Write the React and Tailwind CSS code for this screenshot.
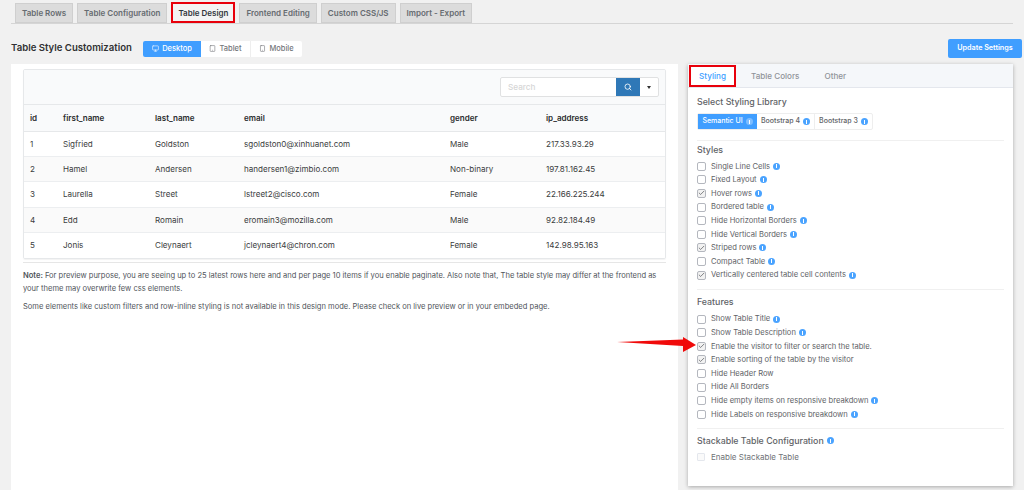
import { Monitor, Tablet, Smartphone, Search, Check } from 'lucide-react';

const tabs = ['Table Rows', 'Table Configuration', 'Table Design', 'Frontend Editing', 'Custom CSS/JS', 'Import - Export'];

const rows = [
  [1, 'Sigfried', 'Goldston', 'sgoldston0@xinhuanet.com', 'Male', '217.33.93.29'],
  [2, 'Hamel', 'Andersen', 'handersen1@zimbio.com', 'Non-binary', '197.81.162.45'],
  [3, 'Laurella', 'Street', 'lstreet2@cisco.com', 'Female', '22.166.225.244'],
  [4, 'Edd', 'Romain', 'eromain3@mozilla.com', 'Male', '92.82.184.49'],
  [5, 'Jonis', 'Cleynaert', 'jcleynaert4@chron.com', 'Female', '142.98.95.163'],
];

const styleOptions = [
  { label: 'Single Line Cells', info: true },
  { label: 'Fixed Layout', info: true },
  { label: 'Hover rows', info: true, checked: true },
  { label: 'Bordered table', info: true },
  { label: 'Hide Horizontal Borders', info: true },
  { label: 'Hide Vertical Borders', info: true },
  { label: 'Striped rows', info: true, checked: true },
  { label: 'Compact Table', info: true },
  { label: 'Vertically centered table cell contents', info: true, checked: true },
];

const featureOptions = [
  { label: 'Show Table Title', info: true },
  { label: 'Show Table Description', info: true },
  { label: 'Enable the visitor to filter or search the table.', checked: true },
  { label: 'Enable sorting of the table by the visitor', checked: true },
  { label: 'Hide Header Row' },
  { label: 'Hide All Borders' },
  { label: 'Hide empty items on responsive breakdown', info: true },
  { label: 'Hide Labels on responsive breakdown', info: true },
];

function InfoDot({ muted }) {
  return (
    <span className={`ml-[3px] inline-flex h-[7px] w-[7px] shrink-0 items-center justify-center rounded-full ${muted ? 'bg-[#7dbdff]' : 'bg-[#4aa3ff]'}`}>
      <span className="h-[4px] w-[1px] bg-white"></span>
    </span>
  );
}

function OptionRow({ option }) {
  return (
    <div className="flex h-[13.6px] items-center text-[7.6px] text-[#606266]">
      <span className={`mr-[5px] flex h-[9px] w-[9px] shrink-0 items-center justify-center rounded-[2px] border border-[#b4b7be] ${option.checked ? 'bg-[#f2f2f2]' : 'bg-white'}`}>
        {option.checked && <Check size={8} strokeWidth={2.5} className="text-[#55585c]" />}
      </span>
      <span>{option.label}</span>
      {option.info && <InfoDot />}
    </div>
  );
}

export default function App() {
  return (
    <div className="relative h-[490px] w-[1024px] overflow-hidden bg-[#f1f1f1] font-['Inter',sans-serif]">
      {/* Top tabs */}
      <div className="mx-[11px] flex h-[24px] items-end gap-[4px] border-b border-[#d5d5d5] pl-[4px]">
        {tabs.map((tab) =>
          tab === 'Table Design' ? (
            <div key={tab} className="flex h-[21px] items-center border-2 border-[#e8000b] bg-[#f4f4f4] px-[5px] text-[8px] font-semibold text-[#32373c]">
              {tab}
            </div>
          ) : (
            <div key={tab} className="flex h-[20px] items-center border border-[#cfcfcf] bg-[#dcdcdc] px-[6px] text-[8px] font-semibold text-[#666b70]">
              {tab}
            </div>
          )
        )}
      </div>

      {/* Title row */}
      <div className="mx-[11px] mt-[16px] flex h-[17px] items-center justify-between">
        <div className="flex items-center">
          <h1 className="w-[132px] text-[9.6px] font-semibold text-[#303133]">Table Style Customization</h1>
          <div className="flex h-[16px] items-center rounded-[2px] bg-white text-[7.5px] font-medium text-[#73767a]">
            <span className="flex h-full w-[58px] items-center justify-center gap-[3px] rounded-l-[2px] bg-[#409eff] text-white">
              <Monitor size={7} /> Desktop
            </span>
            <span className="flex h-full w-[50px] items-center justify-center gap-[3px] border-r border-[#eeeeee]">
              <Tablet size={7} /> Tablet
            </span>
            <span className="flex h-full w-[51px] items-center justify-center gap-[3px]">
              <Smartphone size={7} /> Mobile
            </span>
          </div>
        </div>
        <button className="-mr-[9px] -mt-[1px] flex h-[19px] w-[74px] items-center justify-center rounded-[2px] bg-[#409eff] text-[7.2px] font-semibold text-white">
          Update Settings
        </button>
      </div>

      <div className="mx-[11px] mt-[7px] flex gap-[10px]">
        {/* Left panel */}
        <div className="h-[426px] w-[667px] bg-white px-[12px] pt-[5px]">
          <div className="overflow-hidden rounded-[2px] border border-[#e6e8ea] shadow-[0_1px_1px_rgba(0,0,0,0.05)]">
            <div className="flex h-[35px] items-center justify-end border-b border-[#e6e8ea] bg-[#f9fafb] pr-[6px]">
              <div className="flex h-[20px] w-[159px] rounded-[2px] border border-[#e0e1e2] bg-white">
                <span className="flex w-[115px] items-center pl-[7px] text-[8.2px] font-medium text-[#d6d6d6]">Search</span>
                <span className="flex w-[24px] items-center justify-center bg-[#2f78b7] text-white">
                  <Search size={8} strokeWidth={2.5} />
                </span>
                <span className="flex flex-1 items-center justify-center">
                  <span className="h-0 w-0 border-x-[2.5px] border-t-[3px] border-x-transparent border-t-[#333333]"></span>
                </span>
              </div>
            </div>
            <table className="w-full table-fixed text-left text-[8.05px] text-[#3b3d40]">
              <thead>
                <tr className="h-[26px] border-b border-[#e6e8ea] bg-[#f9fafb] font-semibold text-[#2a2c2e]">
                  <th className="w-[39px] pl-[6px] font-semibold">id</th>
                  <th className="w-[92px] pl-0 font-semibold">first_name</th>
                  <th className="w-[89px] font-semibold">last_name</th>
                  <th className="w-[206px] font-semibold">email</th>
                  <th className="w-[96px] font-semibold">gender</th>
                  <th className="font-semibold">ip_address</th>
                </tr>
              </thead>
              <tbody>
                {rows.map((row, i) => (
                  <tr key={row[0]} className={`h-[25.4px] border-b border-[#eceef0] last:border-b-0 ${i % 2 === 1 ? 'bg-[#fafafa]' : 'bg-white'}`}>
                    <td className="pl-[6px]">{row[0]}</td>
                    <td>{row[1]}</td>
                    <td>{row[2]}</td>
                    <td>{row[3]}</td>
                    <td>{row[4]}</td>
                    <td>{row[5]}</td>
                  </tr>
                ))}
              </tbody>
            </table>
          </div>
          <div className="mt-[3px] h-[1px] bg-[#e6e6e6]"></div>
          <p className="mt-[6px] text-[7.55px] leading-[13px] text-[#50545a]">
            <strong className="font-semibold">Note:</strong> For preview purpose, you are seeing up to 25 latest rows here and and per page 10 items if you enable paginate. Also note that, The table style may differ at the frontend as your theme may overwrite few css elements.
          </p>
          <p className="mt-[5px] text-[7.55px] leading-[13px] text-[#50545a]">
            Some elements like custom filters and row-inline styling is not available in this design mode. Please check on live preview or in your embeded page.
          </p>
        </div>

        {/* Right panel */}
        <div className="h-[422px] w-[325px] bg-white shadow-[0_1px_4px_rgba(0,0,0,0.3)]">
          <div className="flex h-[24px] items-stretch border-b border-[#e4e7ed] bg-[#f5f7fa] pl-[1px] pt-[1px] text-[8.1px] font-medium text-[#909399]">
            <span className="flex w-[47px] items-center justify-center border-2 border-[#e8000b] bg-white text-[#409eff]">Styling</span>
            <span className="ml-[15px] flex items-center">Table Colors</span>
            <span className="ml-[25px] flex items-center">Other</span>
          </div>
          <div className="px-[9px] pt-[7px]">
            <h3 className="text-[8.8px] font-medium leading-[13px] text-[#606266]">Select Styling Library</h3>
            <div className="mt-[5px] flex h-[17px] w-fit rounded-[2px] border border-[#eeeeee] text-[7px] font-medium text-[#606266]">
              <span className="flex w-[59px] items-center justify-center bg-[#409eff] text-white">
                Semantic UI <InfoDot muted />
              </span>
              <span className="flex w-[58px] items-center justify-center border-r border-[#eeeeee]">
                Bootstrap 4 <InfoDot />
              </span>
              <span className="flex w-[57px] items-center justify-center">
                Bootstrap 3 <InfoDot />
              </span>
            </div>
            <div className="mt-[10px] h-[1px] bg-[#f0f0f0]"></div>

            <h3 className="mt-[2px] text-[8.8px] font-medium leading-[13px] text-[#606266]">Styles</h3>
            <div className="mt-[3.5px]">
              {styleOptions.map((option) => (
                <OptionRow key={option.label} option={option} />
              ))}
            </div>
            <div className="mt-[7px] h-[1px] bg-[#f0f0f0]"></div>

            <h3 className="mt-[5.5px] text-[8.8px] font-medium leading-[13px] text-[#606266]">Features</h3>
            <div className="mt-[4px]">
              {featureOptions.map((option) => (
                <OptionRow key={option.label} option={option} />
              ))}
            </div>
            <div className="mt-[7px] h-[1px] bg-[#f0f0f0]"></div>

            <h3 className="mt-[5px] flex items-center text-[8.8px] font-medium leading-[13px] text-[#606266]">
              Stackable Table Configuration <InfoDot />
            </h3>
            <div className="mt-[3px] flex h-[13px] items-center text-[8px] text-[#707377]">
              <span className="mr-[6px] h-[8px] w-[8px] rounded-[1px] border border-[#e4e7ed] bg-[#fafafa]"></span>
              Enable Stackable Table
            </div>
          </div>
        </div>
      </div>

      {/* Red arrow annotation */}
      <svg className="absolute left-[616px] top-[334px]" width="82" height="20" viewBox="0 0 82 20">
        <path d="M1 8 L67 5.5 L67 3 L80 11 L67 18 L67 12 Z" fill="#f00a0a" />
      </svg>
    </div>
  );
}
